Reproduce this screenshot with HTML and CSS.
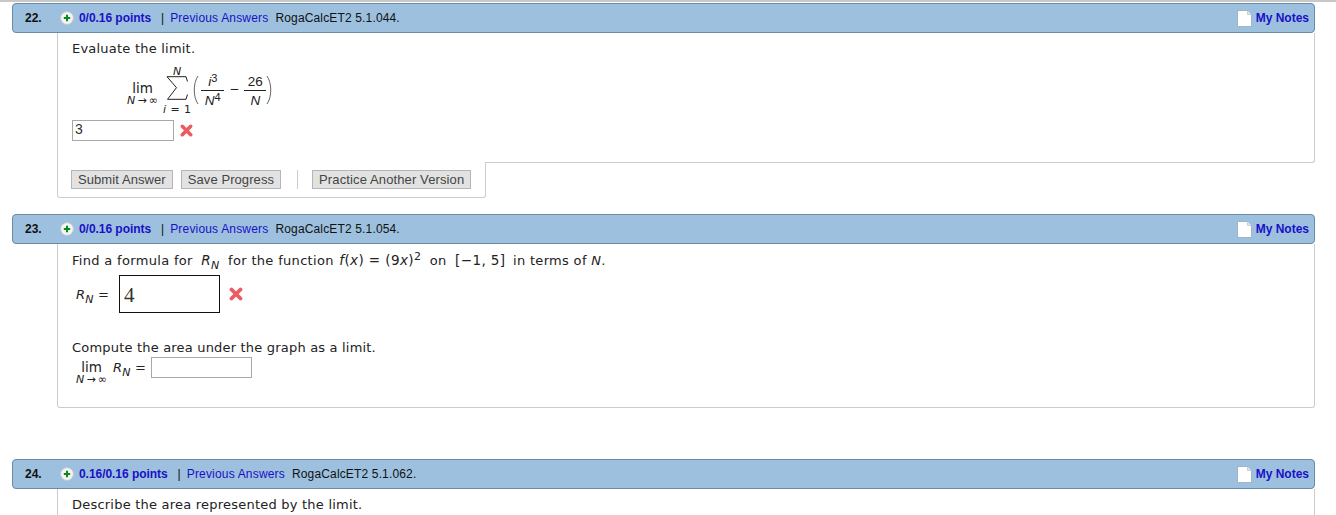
FILE: index.html
```html
<!DOCTYPE html>
<html lang="en">
<head>
<meta charset="utf-8">
<title>Questions</title>
<link rel="stylesheet" href="styles.css">
</head>
<body>
<div class="topline"></div>

<section class="question q22">
  <header class="qhead">
    <span class="qnum">22.</span>
    <span class="plus"><svg viewBox="0 0 14 14" width="14" height="14"><circle cx="7" cy="7" r="6.3" fill="#f4f4f4" stroke="#c9cdd2" stroke-width=".8"/><path d="M7 3.8v6.4M3.8 7h6.4" stroke="#0a8a1c" stroke-width="2"/></svg></span>
    <a class="points">0/0.16 points</a>
    <span class="sep">|</span>
    <a class="prev">Previous Answers</a>
    <span class="ref">RogaCalcET2 5.1.044.</span>
    <span class="notes"><svg viewBox="0 0 15 17" width="15" height="17"><path d="M.5.5h10l4 4v12H.5z" fill="#fff" stroke="#8aa3b8" stroke-width=".7"/><path d="M10.500.5v4h4" fill="#dfe6ec" stroke="#a9bac8" stroke-width=".6"/></svg><a>My Notes</a></span>
  </header>
  <div class="qbody body22">
    <p class="text">Evaluate the limit.</p>
    <div class="display">
      <span class="lim big"><span class="limw">lim</span><span class="limsub"><i>N</i>&#8201;&#8594;&#8201;&#8734;</span></span>
      <span class="sum"><i class="sumtop">N</i><svg class="sigma" viewBox="0 0 22 24" width="22" height="24"><path d="M21.500 5.500 20 .7H1l9.500 11L1.500 23.300H20l1.500-4.800" fill="none" stroke="#222" stroke-width="1"/></svg><span class="sumbot"><i>i</i> = 1</span></span>
      <svg class="paren" viewBox="0 0 7 30" width="7" height="30"><path d="M6 1C1 8 1 22 6 29" fill="none" stroke="#666" stroke-width="1"/></svg>
      <span class="frac"><span class="num"><i>i</i><sup>3</sup></span><span class="den"><i>N</i><sup>4</sup></span></span>
      <span class="minus">&#8722;</span>
      <span class="frac frac2"><span class="num">26</span><span class="den"><i>N</i></span></span>
      <svg class="paren" viewBox="0 0 7 30" width="7" height="30"><path d="M1 1C6 8 6 22 1 29" fill="none" stroke="#666" stroke-width="1"/></svg>
    </div>
    <div class="answer"><span class="box">3</span><svg class="cross" viewBox="0 0 14 14" width="13" height="13"><path d="M2.500 2.500l9 9M11.500 2.500l-9 9" stroke="#ee5a5f" stroke-width="3.800" stroke-linecap="round"/></svg></div>
  </div>
  <div class="actions">
    <button>Submit Answer</button>
    <button>Save Progress</button>
    <span class="divider"></span>
    <button class="practice">Practice Another Version</button>
  </div>
</section>

<section class="question q23">
  <header class="qhead">
    <span class="qnum">23.</span>
    <span class="plus"><svg viewBox="0 0 14 14" width="14" height="14"><circle cx="7" cy="7" r="6.3" fill="#f4f4f4" stroke="#c9cdd2" stroke-width=".8"/><path d="M7 3.8v6.4M3.8 7h6.4" stroke="#0a8a1c" stroke-width="2"/></svg></span>
    <a class="points">0/0.16 points</a>
    <span class="sep">|</span>
    <a class="prev">Previous Answers</a>
    <span class="ref">RogaCalcET2 5.1.054.</span>
    <span class="notes"><svg viewBox="0 0 15 17" width="15" height="17"><path d="M.5.5h10l4 4v12H.5z" fill="#fff" stroke="#8aa3b8" stroke-width=".7"/><path d="M10.500.5v4h4" fill="#dfe6ec" stroke="#a9bac8" stroke-width=".6"/></svg><a>My Notes</a></span>
  </header>
  <div class="qbody body23">
    <p class="text find">Find a formula for <span class="gap m first"><i>R<sub>N</sub></i></span> for the function <span class="gap m second"><i>f</i>(<i>x</i>) = (9<i>x</i>)<sup>2</sup></span> on <span class="gap m third">[&#8722;1, 5]</span> in terms of <i>N</i>.</p>
    <div class="rn"><span class="rnlabel"><i>R<sub>N</sub></i> =</span><span class="bigbox">4</span><svg class="cross" viewBox="0 0 14 14" width="14" height="14"><path d="M2.500 2.500l9 9M11.500 2.500l-9 9" stroke="#ee5a5f" stroke-width="3.800" stroke-linecap="round"/></svg></div>
    <p class="text compute">Compute the area under the graph as a limit.</p>
    <div class="limrow">
      <span class="lim small"><span class="limw">lim</span><span class="limsub"><i>N</i>&#8201;&#8594;&#8201;&#8734;</span></span>
      <span class="rnlabel"><i>R<sub>N</sub></i> =</span>
      <span class="box empty"></span>
    </div>
  </div>
</section>

<section class="question q24">
  <header class="qhead">
    <span class="qnum">24.</span>
    <span class="plus"><svg viewBox="0 0 14 14" width="14" height="14"><circle cx="7" cy="7" r="6.3" fill="#f4f4f4" stroke="#c9cdd2" stroke-width=".8"/><path d="M7 3.8v6.4M3.8 7h6.4" stroke="#0a8a1c" stroke-width="2"/></svg></span>
    <a class="points">0.16/0.16 points</a>
    <span class="sep">|</span>
    <a class="prev">Previous Answers</a>
    <span class="ref">RogaCalcET2 5.1.062.</span>
    <span class="notes"><svg viewBox="0 0 15 17" width="15" height="17"><path d="M.5.5h10l4 4v12H.5z" fill="#fff" stroke="#8aa3b8" stroke-width=".7"/><path d="M10.500.5v4h4" fill="#dfe6ec" stroke="#a9bac8" stroke-width=".6"/></svg><a>My Notes</a></span>
  </header>
  <div class="qbody body24">
    <p class="text">Describe the area represented by the limit.</p>
  </div>
</section>
</body>
</html>
```

FILE: styles.css
```css
html, body { margin: 0; padding: 0; background: #fff; height: 515px; overflow: hidden; }
body { font-family: "DejaVu Sans", sans-serif; color: #222; font-size: 13px; }
.topline { height: 2px; background: #c8c8c8; }
.question { margin: 1px 21px 0 12px; }
.q23 { margin-top: 16px; }
.q24 { margin-top: 51px; }
.qhead {
  display: flex; align-items: center; height: 28px;
  background: #9cc0de; border: 1px solid #6b8aa3; border-radius: 4px;
  font: 12px "Liberation Sans", sans-serif; color: #111; padding-left: 12px;
}
.qnum { font-weight: bold; width: 35px; }
.plus { width: 14px; height: 14px; margin-right: 5px; display: flex; }
.points { font-weight: bold; color: #1a10c8; letter-spacing: -.05px; }
.sep { margin: 0 6px 0 10px; }
.prev { color: #1a10c8; margin-right: 7px; letter-spacing: .18px; }
.ref { letter-spacing: .15px; }
.notes { margin-left: auto; display: flex; align-items: center; gap: 4px; padding-right: 5px; }
.notes a { font-weight: bold; color: #1a10c8; }
.qbody { margin-left: 45px; background: #fff; border: 1px solid #ccc; border-top: 0; padding: 0 14px; border-radius: 0 0 3px 3px; }
.body22 { height: 129px; border-bottom-left-radius: 0; }
.body23 { height: 163px; }
.body24 { height: 30px; border-bottom: 0; }
.text { margin: 0; padding-top: 8px; line-height: 16px; letter-spacing: .22px; }
.find { letter-spacing: .32px; }
.gap { margin: 0 4px; }
.first { margin-left: 4px; }
.second { margin-left: 1px; }
.third { margin-right: 3px; }
.m { font-size: 13.500px; letter-spacing: .4px; }
sub { font-size: 11px; line-height: 0; }
sup { font-size: 11px; line-height: 0; }
.display { display: flex; align-items: center; height: 51px; margin: 7px 0 0 55px; font-size: 13px; }
.lim { display: flex; flex-direction: column; align-items: center; }
.big { margin-top: 8px; }
.limw { font-size: 13.500px; line-height: 14px; }
.limsub { font-size: 11px; line-height: 11px; white-space: nowrap; }
.sum { display: flex; flex-direction: column; align-items: center; margin: 3px 1px 0 5px; font: 11px/11px "DejaVu Sans", sans-serif; }
.sumtop { line-height: 9px; }
.sigma { display: block; }
.sumbot { white-space: nowrap; margin-top: 4px; letter-spacing: .4px; }
.paren { display: block; flex: none; }
.frac { display: flex; flex-direction: column; align-items: center; width: 23px; margin: 4px 1px 0 2px; font: 13.500px/16px "Liberation Sans", sans-serif; }
.frac2 { width: 22px; margin: 4px 0 0; }
.num { border-bottom: 1px solid #222; width: 100%; text-align: center; }
.den { padding-top: 2px; }
.frac sup { vertical-align: 4px; }
.minus { margin: 0 5px 2px 4px; font-size: 12px; }
.answer { display: flex; align-items: center; gap: 6px; margin-top: 5px; }
.box { display: block; width: 98px; height: 19px; border: 1px solid #a8a8a8; background: #fff; padding-left: 2px; font: 14px/17px "Liberation Sans", sans-serif; color: #333; }
.cross { display: block; }
.actions {
  display: flex; align-items: center; height: 35px; width: 414px; margin: -1px 0 0 45px; padding-left: 13px;
  background: #fff; border: 1px solid #ccc; border-top: 0; border-radius: 0 0 3px 3px; position: relative;
}
button {
  height: 19px; padding: 0 6px; border: 1px solid #b5b5b5; background: #e2e2e2;
  font: 13px "Liberation Sans", sans-serif; color: #444; margin-right: 8px; letter-spacing: .08px; border-radius: 0;
}
.practice { letter-spacing: .12px; }
.divider { width: 1px; height: 19px; background: #ccc; margin: 0 14px 0 8px; }
.rn { display: flex; align-items: center; margin: 6px 0 0 4px; }
.rnlabel { font-size: 13px; white-space: nowrap; letter-spacing: .2px; }
.bigbox { width: 95px; height: 36px; border: 1px solid #111; margin: 0 9px 0 10px; padding-left: 4px; font: 21px/38px "Liberation Serif", serif; color: #333; }
.compute { padding-top: 27px; letter-spacing: .19px; }
.limrow { display: flex; align-items: flex-start; margin-top: 1px; }
.small { margin: 3px 6px 0 4px; }
.limrow .rnlabel { line-height: 16px; margin-top: 3px; }
.empty { margin-left: 5px; margin-top: 0; width: 99px; height: 19px; padding: 0; }
```
